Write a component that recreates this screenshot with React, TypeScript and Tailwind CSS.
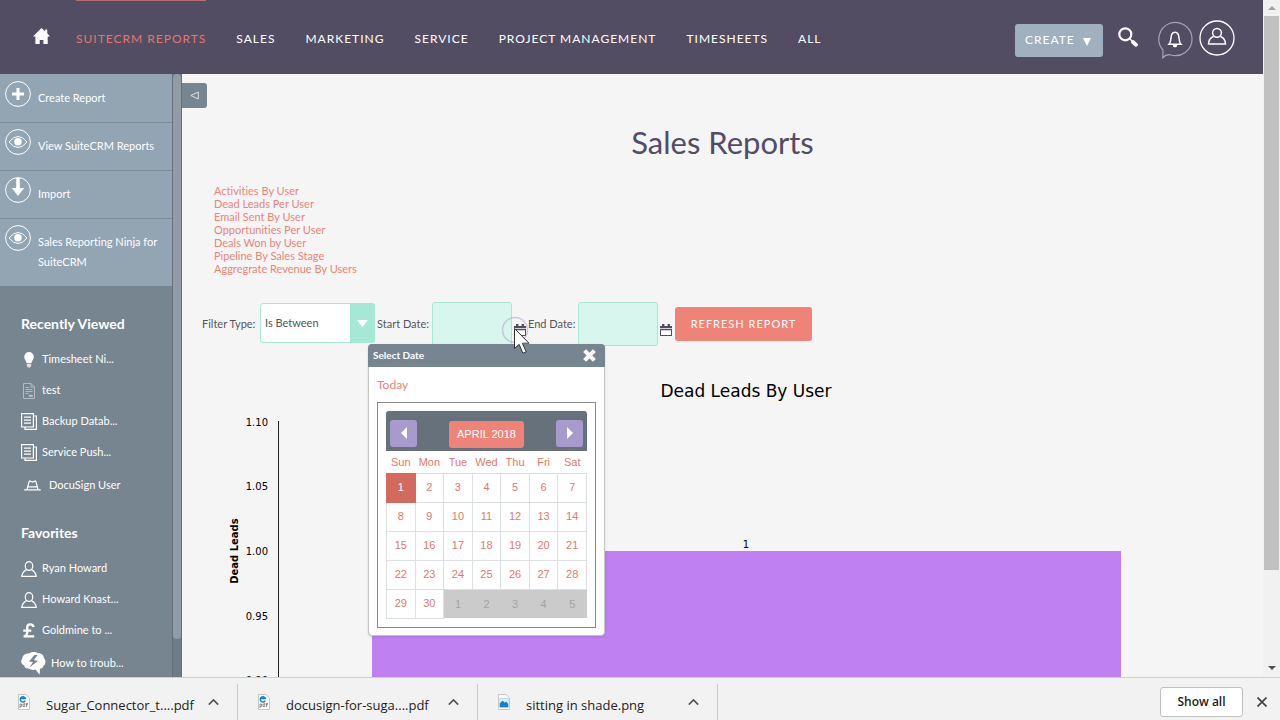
import { useState } from "react";
import type { ReactNode } from "react";

const NAV = ["SuiteCRM Reports", "Sales", "Marketing", "Service", "Project Management", "Timesheets", "All"];

const REPORTS = [
  "Activities By User",
  "Dead Leads Per User",
  "Email Sent By User",
  "Opportunities Per User",
  "Deals Won by User",
  "Pipeline By Sales Stage",
  "Aggregrate Revenue By Users",
];

const WEEKDAYS = ["Sun", "Mon", "Tue", "Wed", "Thu", "Fri", "Sat"];

const TICKS = [
  { label: "1.10", y: 52 },
  { label: "1.05", y: 116 },
  { label: "1.00", y: 181 },
  { label: "0.95", y: 246 },
  { label: "0.90", y: 310 },
];

/* ---------- icons ---------- */

function PlusIcon() {
  return (
    <svg className="size-[26px] shrink-0" viewBox="0 0 26 26" fill="none" stroke="white">
      <circle cx="13" cy="13" r="12.4" strokeWidth="1" />
      <path d="M13 7v12M7 13h12" strokeWidth="3" />
    </svg>
  );
}

function EyeIcon() {
  return (
    <svg className="size-[26px] shrink-0" viewBox="0 0 26 26" fill="none" stroke="white">
      <circle cx="13" cy="13" r="12.4" />
      <path d="M4 13q9-11 18 0q-9 11-18 0z" />
      <circle cx="13" cy="12.7" r="3.8" fill="white" stroke="none" />
    </svg>
  );
}

function ImportIcon() {
  return (
    <svg className="size-[26px] shrink-0" viewBox="0 0 26 26" fill="none" stroke="white">
      <circle cx="13" cy="13" r="12.4" />
      <path d="M11.2 1h3.6v10h4.5L13 19 6.7 11h4.5z" fill="white" stroke="none" />
    </svg>
  );
}

function BulbIcon() {
  return (
    <svg className="mx-[3px] h-4 w-[10px]" viewBox="0 0 10 16" fill="white">
      <path d="M5 0a4.8 4.8 0 0 0-4.8 4.8C.2 7.6 2.2 8.4 2.6 11.3h4.8C7.8 8.4 9.8 7.6 9.8 4.8A4.8 4.8 0 0 0 5 0z" />
      <path d="M2.8 12h4.4v2L6 15.6H4L2.8 14z" opacity=".75" />
    </svg>
  );
}

function PageIcon() {
  return (
    <svg className="mx-[2px] h-4 w-3" viewBox="0 0 12 16" fill="none" stroke="#b7c1c9" strokeWidth=".9">
      <path d="M.5.5H8L11.5 4v11.5H.5zM8 .5V4h3.500M2.500 4.500H6M2.500 6.500h7M2.500 8.500h7M2.500 10.500h3" />
      <path d="M5.500 13.500l1.500-2 1 1.200 1-1 1.200 1.800z" fill="#dfe5e9" stroke="none" />
    </svg>
  );
}

function PagesIcon() {
  return (
    <svg className="h-[17px] w-4" viewBox="0 0 16 17" fill="none" stroke="white" strokeWidth="1.2">
      <path d="M.6.6h11.800v13.400H.6zM12.400 3h3v13.400H4V14M3 4.200h7M3 7.200h7M3 10.200h7" />
    </svg>
  );
}

function HatIcon() {
  return (
    <svg className="mx-[3px] h-[11px] w-[17px]" viewBox="0 0 17 11" fill="none" stroke="white" strokeWidth="1.2">
      <path d="M3 9.500L5 1.800q.3-1 1.200-.7l2.300.9 2.300-.9q.9-.3 1.200.7l2 7.700M3.700 6.800h9.600M.2 9.900h16.600" />
    </svg>
  );
}

function PersonIcon() {
  return (
    <svg className="h-4 w-4" viewBox="0 0 17 16" fill="none" stroke="white" strokeWidth="1.3" preserveAspectRatio="none">
      <ellipse cx="8.500" cy="5" rx="4" ry="4.400" />
      <path d="M5.800 8.600C3.500 10 1.200 11.500.8 15.300h15.400c-.4-3.800-2.700-5.300-5-6.700" />
    </svg>
  );
}

function PoundIcon() {
  return (
    <svg className="mx-[2px] h-[15px] w-3" viewBox="0 0 12 15" fill="none" stroke="white" strokeWidth="2.400">
      <path d="M10.500 4C10 .6 4.200.3 4.200 4.500c0 3 1.300 6.500-2.200 8.900M.3 7.600h8M.6 13.400h10.600" />
    </svg>
  );
}

function BrainIcon() {
  return (
    <svg className="h-[23px] w-[25px]" viewBox="0 0 25 23" fill="white">
      <path d="M8 1.500C11-.5 15-.3 17 1.300c4-.3 6 2.500 5.800 4.700 2.200 2 2.300 6-.3 7.800-.5 2.200-2 3-3.500 3l-.4 6-4-5.300C12 18.500 9 17.800 8 16.500c-3 .5-4.500-1-4.600-3C0 12.500-.8 8.500 1.200 7 1 3.500 4.500 1 8 1.500z" />
      <path d="M13.500 3L8 9.500l4 .6-3.500 5.500L17 8.800l-4.200-.5L16.500 3z" fill="#778590" />
    </svg>
  );
}

function CalendarIcon() {
  return (
    <svg className="h-3 w-3" viewBox="0 0 12 12" fill="#534d64">
      <path d="M1 5.500h10v5.700H1z" fill="white" />
      <path d="M2 0h2.400v2h3.200V0H10v2h2v10H0V2h2zM1 6.200v4.800h10V6.200z" fillRule="evenodd" />
      <path d="M0 4.200h12v.8H0z" fill="#f5f5f5" />
    </svg>
  );
}

function FileIcon({ kind }: { kind: string }) {
  return (
    <svg className="h-4 w-3" viewBox="0 0 12 16" fill="none">
      <path d="M.5.5H8L11.500 4v11.500H.5z" fill="#fdfdfd" stroke="#bbb" strokeWidth=".8" />
      {kind === "pdf" ? (
        <>
          <path d="M7.200 6.600A2.600 2.600 0 1 1 7.400 4.600H2.600" stroke="#1480d0" strokeWidth="1.500" />
          <path d="M2 14v-4h1.500v2.500H2M6.800 9v3.500H5V10h1.800M8.500 13V9.500h1.500M8 10.800h2" stroke="#777" strokeWidth=".8" />
        </>
      ) : (
        <>
          <path d="M1.800 4.500h8.400v8.700H1.800z" fill="#e8f4fc" stroke="#8cc4ec" strokeWidth=".6" />
          <path d="M1.800 13.200V9.500l2.700-3 2.200 2.300 1.300-1.300 2.200 2.200v3.500z" fill="#1480d0" />
        </>
      )}
    </svg>
  );
}

/* ---------- header ---------- */

function Header() {
  return (
    <header className="flex h-[74px] shrink-0 items-stretch bg-[#534d64] pr-7 text-[12px] text-white">
      <a href="#home" aria-label="Home" className="flex w-[76px] shrink-0 pt-7 pl-[33px]">
        <svg className="h-4 w-[17px]" viewBox="0 0 17 16" fill="white">
          <path d="M8.500 0l3.700 3.400V1.600h2v3.700L17 8.400h-2.300V16h-4.300v-4H6.700v4H2.400V8.400H0z" />
        </svg>
      </a>
      <nav className="flex flex-1 gap-[30px]">
        {NAV.map((item, i) => (
          <a
            key={item}
            href="#module"
            className={
              i === 0
                ? "h-full border-t border-[#b56e74] pt-7 leading-5 tracking-[1px] whitespace-nowrap text-[#e2776e] uppercase"
                : "h-full pt-[29px] leading-5 tracking-[1px] whitespace-nowrap uppercase"
            }
          >
            {item}
          </a>
        ))}
      </nav>
      <div className="flex items-start">
        <button className="mt-6 flex h-[33px] w-[88px] items-center justify-between rounded-[3px] bg-[#a1b0bf] pr-3 pb-[2px] pl-[10px] tracking-[1px]">
          CREATE
          <svg className="mt-1 size-2 shrink-0" viewBox="0 0 8 8" fill="white">
            <path d="M0 0h8L4 8z" />
          </svg>
        </button>
        <button aria-label="Search" className="mt-[27px] ml-[15px]">
          <svg className="size-5" viewBox="0 0 20 20" fill="none" stroke="white">
            <circle cx="7.300" cy="7.300" r="6" strokeWidth="2.200" />
            <path d="M11.800 11.800l2 2" strokeWidth="1.500" />
            <path d="M15 15l3 2.800" strokeWidth="3.800" strokeLinecap="round" />
          </svg>
        </button>
        <button aria-label="Notifications" className="mt-5 ml-[19px]">
          <svg className="h-[39px] w-[36px]" viewBox="0 0 36 39" fill="none">
            <path d="M6 30A16.600 16.600 0 1 1 13 34.700Q8.500 34.500 5.800 37.800z" stroke="#a7a3b5" strokeWidth="1.200" />
            <path d="M12 24.200h12c-1.700-1.700-1.800-3.300-2-6.200-.3-3.600-1.700-5.700-4-5.700s-3.700 2.100-4 5.700c-.2 2.900-.3 4.500-2 6.200z" stroke="white" strokeWidth="1.500" />
            <path d="M16 25h4v1.600l-2 1-2-1z" fill="white" />
          </svg>
        </button>
        <button aria-label="Account" className="mt-5 ml-[6px]">
          <svg className="size-9" viewBox="0 0 36 36" fill="none" stroke="white">
            <circle cx="18" cy="18" r="17" strokeWidth="1.300" />
            <circle cx="18" cy="12.800" r="4.400" strokeWidth="1.500" />
            <path d="M14.500 16.500c-3.200 1.200-4.800 3.500-5 7.500h17c-.2-4-1.800-6.300-5-7.500" strokeWidth="1.500" />
          </svg>
        </button>
      </div>
    </header>
  );
}

/* ---------- sidebar ---------- */

function ActionLink({ icon, label, last }: { icon: ReactNode; label: string; last?: boolean }) {
  return (
    <a
      href="#action"
      className={
        last
          ? "flex min-h-[67px] gap-[7px] pt-[6px] pr-2 pl-[5px]"
          : "flex min-h-12 gap-[7px] border-b border-[#7b8b98] pt-[6px] pr-2 pl-[5px]"
      }
    >
      {icon}
      <span className="pt-[7px] leading-5">{label}</span>
    </a>
  );
}

function RecordLink({ icon, label, tall }: { icon: ReactNode; label: string; tall?: boolean }) {
  return (
    <a href="#record" className={tall ? "flex h-[35px] items-center gap-[5px]" : "flex h-[31px] items-center gap-[5px]"}>
      {icon}
      <span>{label}</span>
    </a>
  );
}

function Sidebar() {
  return (
    <aside className="flex w-[182px] shrink-0 overflow-hidden bg-[#778590] text-[11px] text-white">
      <div className="min-w-0 flex-1">
        <div className="bg-[#93a4b3] pt-px">
          <ActionLink icon={<PlusIcon />} label="Create Report" />
          <ActionLink icon={<EyeIcon />} label="View SuiteCRM Reports" />
          <ActionLink icon={<ImportIcon />} label="Import" />
          <ActionLink icon={<EyeIcon />} label="Sales Reporting Ninja for SuiteCRM" last />
        </div>
        <div className="pl-[21px]">
          <h2 className="mt-7 mb-[10px] text-[14px] leading-5 font-bold">Recently Viewed</h2>
          <RecordLink icon={<BulbIcon />} label="Timesheet Ni..." />
          <RecordLink icon={<PageIcon />} label="test" />
          <RecordLink icon={<PagesIcon />} label="Backup Datab..." />
          <RecordLink icon={<PagesIcon />} label="Service Push..." />
          <RecordLink icon={<HatIcon />} label="DocuSign User" tall />
          <h2 className="mt-5 mb-[10px] text-[14px] leading-5 font-bold">Favorites</h2>
          <RecordLink icon={<PersonIcon />} label="Ryan Howard" />
          <RecordLink icon={<PersonIcon />} label="Howard Knast..." />
          <RecordLink icon={<PoundIcon />} label="Goldmine to ..." />
          <RecordLink icon={<BrainIcon />} label="How to troub..." tall />
        </div>
      </div>
      <div className="w-[10px] border-x border-[#64717c] bg-[#6f7c87] pb-[38px]">
        <div className="h-full rounded-full bg-[#919ca5]" />
      </div>
    </aside>
  );
}

/* ---------- date picker ---------- */

function DayCell({ day, muted, selected }: { day: number; muted?: boolean; selected?: boolean }) {
  if (muted) {
    return <td className="h-[29px] bg-[#cbcbcb] text-[#a3a3a3]">{day}</td>;
  }
  return (
    <td className={selected ? "h-[29px] border border-[#d4695d] bg-[#d4695d] text-white" : "h-[29px] border border-[#dbe0e3]"}>
      <button>{day}</button>
    </td>
  );
}

function DatePicker({ onClose }: { onClose: () => void }) {
  return (
    <div className="absolute top-[42px] left-[-64px] z-10 w-[237px] rounded-[4px] border border-[#c4c4c4] bg-white pb-[7px] shadow-sm">
      <div className="-m-px flex h-[23px] items-center justify-between rounded-t-[4px] bg-[#778590] pr-[9px] pl-[5px] text-[10px] font-bold text-white">
        Select Date
        <button type="button" aria-label="Close" onClick={onClose}>
          <svg className="size-[13px]" viewBox="0 0 12 12" stroke="white" strokeWidth="3.800">
            <path d="M1.500 1.500l9 9M10.500 1.500l-9 9" />
          </svg>
        </button>
      </div>
      <button type="button" className="mt-[9px] ml-2 block h-5 text-[12px] text-[#ec8479]">
        Today
      </button>
      <div className="mx-2 mt-[7px] border border-[#8a8a8a] p-2 font-['Liberation_Sans'] text-[11px] text-[#e0796f]">
        <div className="flex h-10 items-center justify-between rounded-t-[3px] bg-[#66717b] px-1 pt-1">
          <button type="button" aria-label="Previous month" className="flex size-[27px] items-center justify-center rounded-[3px] bg-[#a79bcd]">
            <svg className="h-3 w-[6px]" viewBox="0 0 6 12" fill="white">
              <path d="M6 0v12L0 6z" />
            </svg>
          </button>
          <button type="button" className="mt-[2px] h-[27px] w-[75px] rounded-[3px] bg-[#f08377] text-white">
            APRIL 2018
          </button>
          <button type="button" aria-label="Next month" className="flex size-[27px] items-center justify-center rounded-[3px] bg-[#a79bcd]">
            <svg className="h-3 w-[6px]" viewBox="0 0 6 12" fill="white">
              <path d="M0 0v12l6-6z" />
            </svg>
          </button>
        </div>
        <table className="w-full table-fixed border-collapse text-center">
          <thead>
            <tr>
              {WEEKDAYS.map((d) => (
                <th key={d} className="h-[22px] font-normal">
                  {d}
                </th>
              ))}
            </tr>
          </thead>
          <tbody>
            {[0, 1, 2, 3, 4].map((week) => (
              <tr key={week}>
                {WEEKDAYS.map((d, i) => {
                  const n = week * 7 + i + 1;
                  return <DayCell key={d} day={n > 30 ? n - 30 : n} muted={n > 30} selected={n === 1} />;
                })}
              </tr>
            ))}
          </tbody>
        </table>
      </div>
    </div>
  );
}

function Pointer() {
  return (
    <svg className="pointer-events-none absolute top-[14px] left-[69px] z-20 h-[40px] w-[30px]" viewBox="0 0 30 40">
      <circle cx="14" cy="14" r="12.500" fill="none" stroke="#a79bcd" strokeOpacity=".5" strokeWidth="1.500" />
      <path d="M13.500 12.500v20l4.600-4.200 3.800 9 3.300-1.500-3.800-8.600h6.600z" fill="white" stroke="#333" strokeWidth="1" />
    </svg>
  );
}

/* ---------- report ---------- */

function Filters() {
  const [open, setOpen] = useState(true);
  const [start, setStart] = useState("");
  const [end, setEnd] = useState("");

  return (
    <form className="mt-[27px] flex h-11 items-center text-[11px] text-[#555]">
      <label htmlFor="filter" className="w-[58px] whitespace-nowrap">
        Filter Type:
      </label>
      <div className="relative mb-[2px]">
        <select
          id="filter"
          defaultValue="between"
          className="block h-10 w-[115px] appearance-none rounded-[3px] border border-[#a5e8d6] bg-white pl-1 text-[11px] outline-none"
        >
          <option value="between">Is Between</option>
        </select>
        <div className="pointer-events-none absolute inset-y-0 right-0 flex w-[25px] items-center justify-center rounded-r-[3px] bg-[#a5e8d6]">
          <svg className="h-[7px] w-[11px]" viewBox="0 0 11 7" fill="white">
            <path d="M0 0h11L5.500 7z" />
          </svg>
        </div>
      </div>
      <label htmlFor="start" className="w-[57px] pl-[2px] whitespace-nowrap">
        Start Date:
      </label>
      <div className="relative flex items-center gap-[2px]">
        <input
          id="start"
          value={start}
          onChange={(e) => setStart(e.target.value)}
          className="h-11 w-20 rounded-[3px] border border-[#a5e8d6] bg-[#d8f5ee] outline-none"
        />
        <button type="button" aria-label="Pick start date" onClick={() => setOpen(!open)} className="pt-3">
          <CalendarIcon />
        </button>
        {open && <DatePicker onClose={() => setOpen(false)} />}
        <Pointer />
      </div>
      <label htmlFor="end" className="w-[52px] pl-[2px] whitespace-nowrap">
        End Date:
      </label>
      <input
        id="end"
        value={end}
        onChange={(e) => setEnd(e.target.value)}
        className="h-11 w-20 rounded-[3px] border border-[#a5e8d6] bg-[#d8f5ee] outline-none"
      />
      <button type="button" aria-label="Pick end date" className="ml-[2px] pt-3">
        <CalendarIcon />
      </button>
      <button type="button" className="ml-[3px] h-[34px] w-[137px] rounded-[3px] bg-[#f08377] tracking-[1px] text-white">
        REFRESH REPORT
      </button>
    </form>
  );
}

function Chart() {
  return (
    <svg className="mt-6 block w-full font-['DejaVu_Sans']" viewBox="0 0 1041 330" role="img" aria-label="Dead Leads By User">
      <text x="544" y="27" textAnchor="middle" fontSize="17">
        Dead Leads By User
      </text>
      {TICKS.map((t) => (
        <text key={t.label} x="66" y={t.y + 4} textAnchor="end" fontSize="10">
          {t.label}
        </text>
      ))}
      <text x="36" y="181" transform="rotate(-90 36 181)" textAnchor="middle" fontSize="10" fontWeight="bold">
        Dead Leads
      </text>
      <path d="M76.500 51v279" stroke="#222" />
      <rect x="170" y="181" width="749" height="149" fill="#bf80f2" />
      <text x="544" y="178" textAnchor="middle" fontSize="10">
        1
      </text>
    </svg>
  );
}

/* ---------- downloads ---------- */

function DownloadItem({ kind, name }: { kind: string; name: string }) {
  return (
    <div className="flex w-60 items-center border-r border-[#c9c9c9] pr-[18px] pl-5">
      <FileIcon kind={kind} />
      <span className="mt-2 ml-4 flex-1 whitespace-nowrap">{name}</span>
      <button aria-label={`Options for ${name}`}>
        <svg className="h-[6px] w-[11px]" viewBox="0 0 11 6" fill="none" stroke="#555" strokeWidth="1.700">
          <path d="M.8 5.600l4.700-4.700 4.700 4.700" />
        </svg>
      </button>
    </div>
  );
}

function DownloadBar() {
  return (
    <footer className="flex h-[43px] shrink-0 border-t border-[#cfcfcf] bg-[#f2f2f2] pt-[6px] font-['Open_Sans'] text-[13px] text-[#222]">
      <div className="-ml-[2px] flex flex-1">
        <DownloadItem kind="pdf" name="Sugar_Connector_t....pdf" />
        <DownloadItem kind="pdf" name="docusign-for-suga....pdf" />
        <DownloadItem kind="png" name="sitting in shade.png" />
      </div>
      <button className="mt-[3px] h-[30px] w-[83px] rounded-[3px] border border-[#c0c0c0] bg-white text-[12px] font-semibold">Show all</button>
      <button aria-label="Close downloads" className="mr-[13px] ml-[14px]">
        <svg className="size-[10px]" viewBox="0 0 10 10" stroke="#444" strokeWidth="1.700">
          <path d="M.5.5l9 9M9.500.5l-9 9" />
        </svg>
      </button>
    </footer>
  );
}

export default function App() {
  return (
    <div className="flex h-screen flex-col overflow-hidden bg-[#f5f5f5] font-['Lato',sans-serif] [font-variant-ligatures:none]">
      <div className="flex min-h-0 flex-1">
        <div className="flex min-w-0 flex-1 flex-col">
          <Header />
          <div className="flex min-h-0 flex-1">
            <Sidebar />
            <main className="min-w-0 flex-1 overflow-hidden">
              <button aria-label="Collapse sidebar" className="mt-[9px] flex h-[25px] w-[25px] items-center justify-center rounded-r-[3px] bg-[#778590]">
                <svg className="size-[9px]" viewBox="0 0 9 9" fill="none" stroke="#d9dfe4">
                  <path d="M8.300 1v7L.8 4.500z" />
                </svg>
              </button>
              <h1 className="mt-4 text-center text-[31px] leading-9 text-[#534d64]">Sales Reports</h1>
              <div className="px-5">
                <ul className="mt-6 pl-3 text-[11px] leading-[13px] text-[#ec8479]">
                  {REPORTS.map((r) => (
                    <li key={r}>
                      <a href="#report">{r}</a>
                    </li>
                  ))}
                </ul>
                <Filters />
                <Chart />
              </div>
            </main>
          </div>
        </div>
        {/* page scrollbar */}
        <div className="flex w-[17px] shrink-0 flex-col items-center bg-[#f1f1f1]">
          <svg className="my-[6px] h-[4px] w-2 shrink-0" viewBox="0 0 8 4" fill="#a3a3a3">
            <path d="M0 4h8L4 0z" />
          </svg>
          <div className="mb-24 w-[15px] flex-1 bg-[#c1c1c1]" />
          <svg className="mb-[7px] h-[4px] w-2 shrink-0" viewBox="0 0 8 4" fill="#505050">
            <path d="M0 0h8L4 4z" />
          </svg>
        </div>
      </div>
      <DownloadBar />
    </div>
  );
}
